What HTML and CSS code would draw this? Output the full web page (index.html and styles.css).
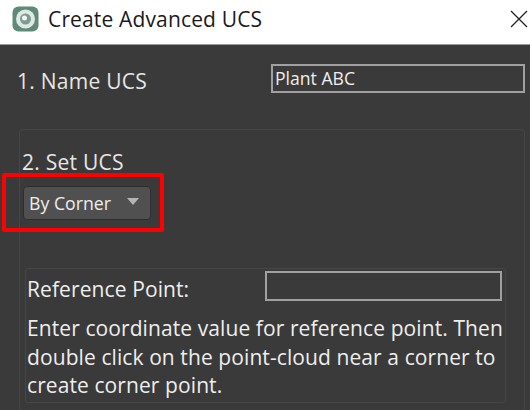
FILE: index.html
```html
<!DOCTYPE html>
<html>
<head>
    <title>Create Advanced UCS</title>
    <link rel="stylesheet" href="styles.css">
</head>
<body>
    <div class="dialog">
        <div class="title-bar">
            <svg class="app-icon" width="27" height="26" viewBox="0 0 27 26">
                <defs>
                    <filter id="soft"><feGaussianBlur stdDeviation="0.6"/></filter>
                </defs>
                <g filter="url(#soft)">
                    <rect x="0.5" y="0.5" width="26" height="25" rx="6" fill="#5e8a78"/>
                    <circle cx="13.5" cy="13" r="9.5" fill="#dfe8e4"/>
                    <circle cx="13.5" cy="13" r="5.5" fill="#7d9c90"/>
                    <circle cx="12.5" cy="12" r="2.5" fill="#f4f6f5"/>
                </g>
            </svg>
            <span class="title-text">Create Advanced UCS</span>
            <svg class="close-icon" width="18" height="18" viewBox="0 0 18 18">
                <path d="M1 1 L17 17 M17 1 L1 17" stroke="#222" stroke-width="1.3" fill="none"/>
            </svg>
        </div>
        <div class="content">
            <div class="name-row">
                <span class="label name-label">1. Name UCS</span>
                <div class="text-box name-box">Plant ABC</div>
            </div>
            <div class="group">
                <div class="label set-label">2. Set UCS</div>
                <div class="combo-wrap">
                    <div class="combo">
                        <span>By Corner</span>
                        <span class="combo-arrow"></span>
                    </div>
                    <div class="highlight"></div>
                </div>
                <div class="inner-group">
                    <div class="ref-row">
                        <span class="ref-label">Reference Point:</span>
                        <div class="text-box ref-box"></div>
                    </div>
                    <p class="hint">Enter coordinate value for reference point. Then double click on the point-cloud near a corner to create corner point.</p>
                </div>
            </div>
        </div>
    </div>
</body>
</html>
```

FILE: styles.css
```css
html, body { margin: 0; padding: 0; }
body { width: 530px; height: 410px; overflow: hidden; font-family: "Open Sans", "Noto Sans", sans-serif; background: #3a3a3a; }
.dialog { display: flex; flex-direction: column; height: 410px; }
.title-bar { display: flex; align-items: center; height: 45px; box-sizing: border-box; background: #fff; border-bottom: 1px solid #9a9a9a; padding: 0 2px 6px 12px; flex-shrink: 0; }
.app-icon { margin-right: 9px; }
.title-text { font-size: 21px; line-height: 28px; letter-spacing: 0.15px; color: #1a1a1a; flex: 1; }
.content { flex: 1; padding: 0 5px 0 19px; color: #e8e8e8; min-height: 0; }
.name-row { display: flex; justify-content: space-between; align-items: center; margin: 19px 0 36px -2px; height: 29px; }
.label { font-size: 21px; letter-spacing: 0.25px; color: #e6e6e6; }
.name-label { padding-top: 4px; }
.text-box { box-sizing: border-box; border: 2px solid #a0a0a0; font-size: 17.6px; color: #eee; line-height: 25px; padding-left: 2px; }
.name-box { width: 254px; height: 29px; }
.group { border: 1px solid #464646; border-radius: 3px; height: 300px; padding: 19px 0 0 2px; box-sizing: border-box; }
.set-label { line-height: 26px; }
.combo-wrap { position: relative; width: 128px; margin: 11px 0 0 1px; }
.combo { display: flex; align-items: center; justify-content: space-between; box-sizing: border-box; width: 128px; height: 34px; background: #505050; border: 1px solid #2e2e2e; border-radius: 4px; padding: 0 11px 0 5px; font-size: 17.7px; color: #eee; }
.combo-arrow { width: 0; height: 0; border-left: 6px solid transparent; border-right: 6px solid transparent; border-top: 7px solid #b4b4b4; margin-bottom: 3px; }
.highlight { position: absolute; left: -21px; top: -13px; width: 162px; height: 59px; box-sizing: border-box; border: 4px solid #f00; border-radius: 2px; }
.inner-group { box-sizing: border-box; width: 481px; height: 135px; margin: 48px 0 0 3px; border: 1px solid #464646; border-radius: 3px; padding: 2px 0 0 1px; }
.ref-row { display: flex; align-items: center; justify-content: space-between; height: 30px; }
.ref-label { font-size: 21px; letter-spacing: 0.1px; color: #eee; padding-top: 5px; }
.ref-box { width: 237px; height: 30px; margin-right: 3px; }
.hint { margin: 13px 0 0; font-size: 21px; line-height: 28.5px; letter-spacing: 0.09px; color: #eee; width: 478px; }
```
